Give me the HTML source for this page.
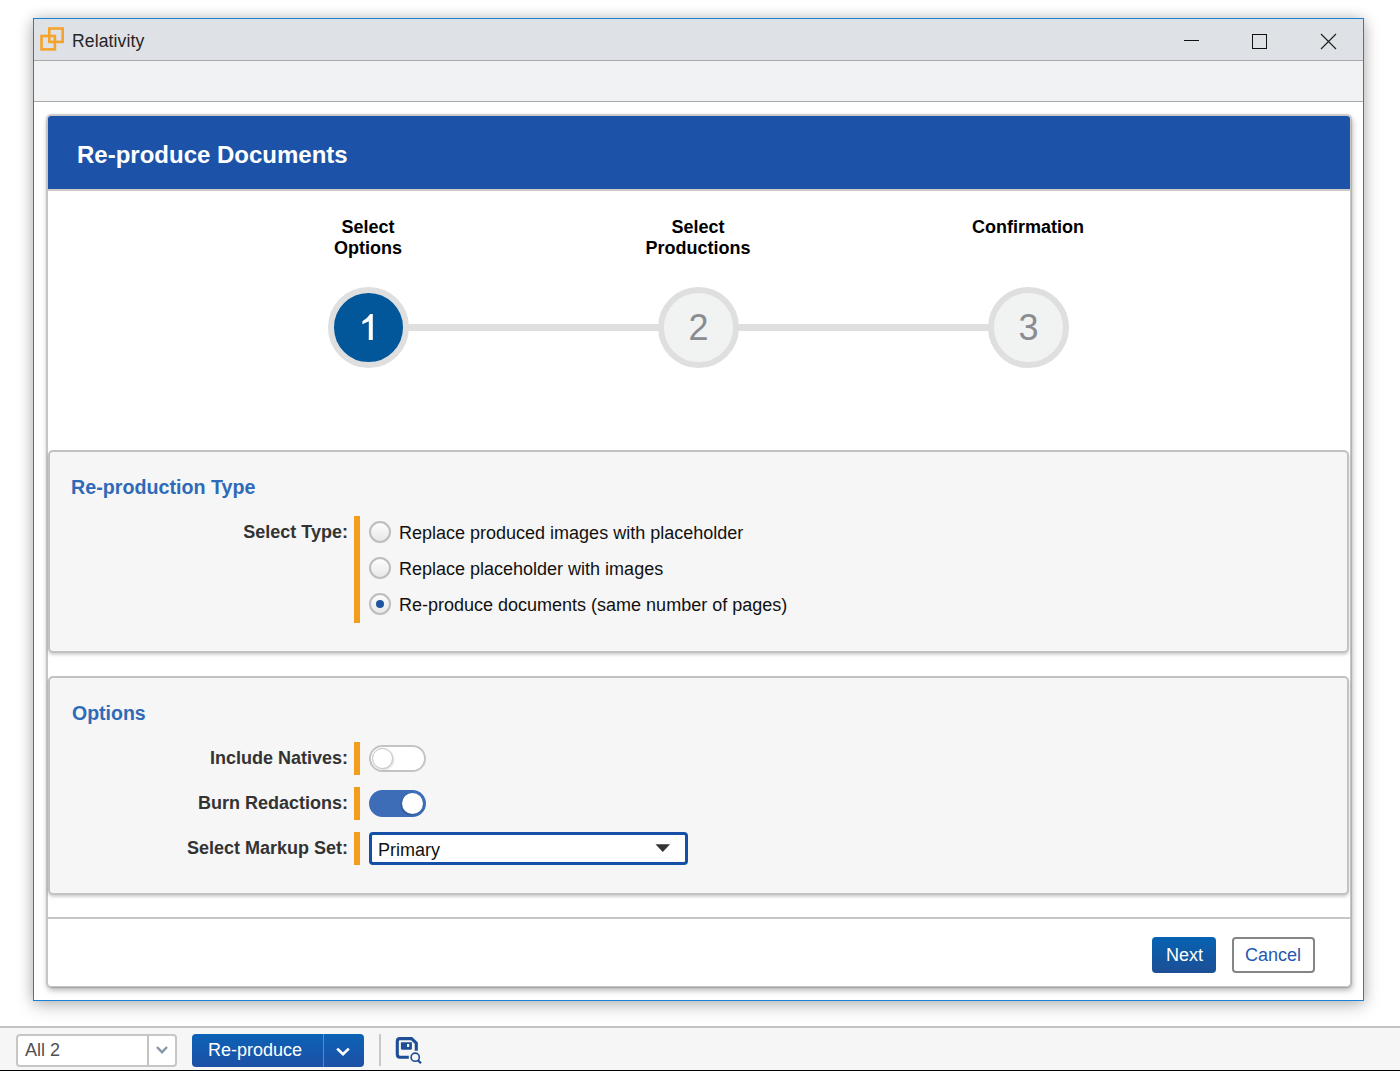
<!DOCTYPE html>
<html><head><meta charset="utf-8">
<style>
*{box-sizing:border-box;margin:0;padding:0}
html,body{width:1400px;height:1071px;overflow:hidden;background:#fff;font-family:"Liberation Sans",sans-serif}
body{position:relative}
.a{position:absolute}
.t{position:absolute;white-space:nowrap;line-height:1}
#win{left:33px;top:18px;width:1331px;height:983px;border:1px solid #1a82d6;background:#fff;box-shadow:0 0 12px rgba(0,0,0,.18),0 5px 17px rgba(0,0,0,.2)}
#title{left:34px;top:19px;width:1329px;height:42px;background:#dee1e6;border-bottom:1px solid #a9a9a9}
#tb{left:34px;top:61px;width:1329px;height:41px;background:#f0f2f4;border-bottom:1px solid #a9a9a9}
#dlg{left:47px;top:115px;width:1304px;height:872px;border:1px solid #c9c5c0;border-radius:4px;background:#fff;box-shadow:0 0 1px 1px rgba(0,0,0,.16),1px 3px 6px rgba(0,0,0,.32)}
#hdr{left:48px;top:116px;width:1302px;height:73px;background:#1c53a9;border-radius:3px 3px 0 0}
#hdrline{left:48px;top:189px;width:1302px;height:2px;background:#cdcac6}
.step{width:200px;text-align:center;font-weight:bold;font-size:18px;line-height:21px;color:#000}
.circ{width:81px;height:81px;border-radius:50%;border:6px solid #dfdfdf;background:#f1f2f2;color:#8a8c90;text-align:center;font-size:36px;line-height:69px}
.line{height:7px;background:#dfdfdf}
.panel{left:48px;width:1301px;background:#f6f6f6;border:2px solid #c2c2c2;border-radius:5px;box-shadow:0 2px 3px rgba(0,0,0,.18)}
.ph{color:#2f6ab7;font-weight:bold;font-size:19.5px}
.lbl{text-align:right;font-weight:bold;font-size:18px;color:#333;width:300px}
.bar{left:354px;width:6px;background:#f39d1f}
.radio{left:369px;width:22px;height:22px;border-radius:50%;border:2px solid #bdbdbd;background:linear-gradient(#fdfdfd,#e8e8e8)}
.rtxt{left:399px;font-size:18px;color:#111}
</style></head><body>
<div id="win" class="a"></div>
<div id="title" class="a"></div>
<svg class="a" style="left:38px;top:26px" width="28" height="28" viewBox="0 0 28 28">
  <rect x="11.3" y="2.5" width="13.4" height="13.4" fill="none" stroke="#f5a32a" stroke-width="2.6"/>
  <rect x="3.5" y="10" width="13.4" height="13.4" fill="none" stroke="#f5a32a" stroke-width="2.6"/>
</svg>
<div class="t" style="left:72px;top:32.5px;font-size:17.6px;letter-spacing:0.1px;color:#262626">Relativity</div>
<div class="a" style="left:1184px;top:40px;width:15px;height:1px;background:#111"></div>
<div class="a" style="left:1252px;top:34px;width:15px;height:15px;border:1px solid #111"></div>
<svg class="a" style="left:1319px;top:32px" width="19" height="19" viewBox="0 0 19 19"><path d="M2 2 L17 17 M17 2 L2 17" stroke="#222" stroke-width="1.2"/></svg>
<div id="tb" class="a"></div>

<div id="dlg" class="a"></div>
<div id="hdr" class="a"></div>
<div id="hdrline" class="a"></div>
<div class="t" style="left:77px;top:143px;font-size:24px;font-weight:bold;color:#fff">Re-produce Documents</div>

<div class="a step" style="left:268px;top:217px">Select<br>Options</div>
<div class="a step" style="left:598px;top:217px">Select<br>Productions</div>
<div class="a step" style="left:928px;top:217px">Confirmation</div>
<div class="a line" style="left:400px;top:324px;width:270px"></div>
<div class="a line" style="left:730px;top:324px;width:270px"></div>
<div class="a circ" style="left:328px;top:287px;background:#02579b;color:#fff"></div>
<svg class="a" style="left:355px;top:308px" width="30" height="37" viewBox="355 308 30 37"><path d="M372.8 314 V340 H368.8 V321.2 L362.4 324.3 V321.2 Q367.2 318.6 370.2 314 Z" fill="#fff"/></svg>
<div class="a circ" style="left:658px;top:287px">2</div>
<div class="a circ" style="left:988px;top:287px">3</div>

<!-- panel 1 -->
<div class="a panel" style="top:450px;height:203px"></div>
<div class="t ph" style="left:71px;top:478px;font-size:19.7px">Re-production Type</div>
<div class="t lbl" style="left:48px;top:523px">Select Type:</div>
<div class="a bar" style="top:516px;height:107px"></div>
<div class="a radio" style="top:521px"></div>
<div class="a radio" style="top:557px"></div>
<div class="a radio" style="top:593px"></div>
<div class="a" style="left:376px;top:600px;width:8px;height:8px;border-radius:50%;background:#1e57a0"></div>
<div class="t rtxt" style="top:524px">Replace produced images with placeholder</div>
<div class="t rtxt" style="top:560px">Replace placeholder with images</div>
<div class="t rtxt" style="top:596px">Re-produce documents (same number of pages)</div>

<!-- panel 2 -->
<div class="a panel" style="top:676px;height:219px"></div>
<div class="t ph" style="left:72px;top:704px">Options</div>
<div class="t lbl" style="left:48px;top:749px">Include Natives:</div>
<div class="t lbl" style="left:48px;top:794px">Burn Redactions:</div>
<div class="t lbl" style="left:48px;top:839px">Select Markup Set:</div>
<div class="a bar" style="top:742px;height:33px"></div>
<div class="a bar" style="top:787px;height:33px"></div>
<div class="a bar" style="top:832px;height:33px"></div>
<!-- toggle off -->
<div class="a" style="left:369px;top:745px;width:57px;height:27px;border-radius:14px;border:2px solid #c4c4c4;background:#fff"></div>
<div class="a" style="left:372px;top:748px;width:21px;height:21px;border-radius:50%;border:1.6px solid #c2c2c2;background:#fff;box-shadow:1px 1px 2px rgba(0,0,0,.15)"></div>
<!-- toggle on -->
<div class="a" style="left:369px;top:790px;width:57px;height:27px;border-radius:14px;background:#3d6db6"></div>
<div class="a" style="left:402px;top:793px;width:21px;height:21px;border-radius:50%;background:#fff;box-shadow:-1px 1px 2px rgba(0,0,0,.25)"></div>
<!-- select -->
<div class="a" style="left:369px;top:832px;width:319px;height:33px;border:3px solid #1650a6;border-radius:4px;background:#fff"></div>
<div class="t" style="left:378px;top:841px;font-size:18px;color:#111">Primary</div>
<svg class="a" style="left:655px;top:844px" width="16" height="10" viewBox="0 0 16 10"><path d="M0.5 0.3 H15 L7.75 8 Z" fill="#333"/></svg>

<!-- footer -->
<div class="a" style="left:48px;top:917px;width:1302px;height:2px;background:#c6c6c6"></div>
<div class="a" style="left:1152px;top:937px;width:64px;height:36px;border-radius:4px;background:linear-gradient(#0662b2,#1c4f95)"></div>
<div class="t" style="left:1166px;top:946px;font-size:18px;color:#fff">Next</div>
<div class="a" style="left:1232px;top:937px;width:83px;height:36px;border-radius:4px;border:2px solid #858585;background:#fff"></div>
<div class="t" style="left:1245px;top:946px;font-size:18px;color:#2458b2">Cancel</div>

<!-- bottom bar -->
<div class="a" style="left:0;top:1026px;width:1400px;height:45px;background:#f6f6f6;border-top:2px solid #c3c3c3"></div>
<div class="a" style="left:0;top:1070px;width:1400px;height:1px;background:#000"></div>
<div class="a" style="left:16px;top:1034px;width:161px;height:33px;border:2px solid #c6c6c6;border-radius:4px;background:#fff"></div>
<div class="a" style="left:147px;top:1036px;width:1.5px;height:29px;background:#c2c2c2"></div>
<svg class="a" style="left:154px;top:1044px" width="16" height="12" viewBox="0 0 16 12"><path d="M3 3 L8 8.3 L13 3" fill="none" stroke="#8797ab" stroke-width="2.5"/></svg>
<div class="t" style="left:25px;top:1041px;font-size:18px;color:#505050">All 2</div>
<div class="a" style="left:192px;top:1034px;width:172px;height:33px;border-radius:4px;background:linear-gradient(#0b62b6,#1e50a5)"></div>
<div class="a" style="left:323px;top:1034px;width:1px;height:33px;background:#4b8fd2"></div>
<div class="t" style="left:208px;top:1041px;font-size:18px;color:#fff">Re-produce</div>
<svg class="a" style="left:334px;top:1045px" width="18" height="13" viewBox="0 0 18 13"><path d="M3.2 3.6 L9 9.2 L14.8 3.6" fill="none" stroke="#fff" stroke-width="2.7"/></svg>
<div class="a" style="left:379px;top:1034px;width:2px;height:32px;background:#c8c8c8"></div>
<svg class="a" style="left:390px;top:1032px" width="38" height="36" viewBox="0 0 38 36">
  <path d="M18.8 25.3 H10 Q7.3 25.3 7.3 22.6 V9.3 Q7.3 6.6 10 6.6 H21.6 L26.3 11.1 V18.8" fill="none" stroke="#1d4f96" stroke-width="3.1"/>
  <path d="M10.9 10.3 H21.9 V16.2 Q21.9 17.8 20.3 17.8 H12.5 Q10.9 17.8 10.9 16.2 Z" fill="#1d4f96"/>
  <rect x="17" y="12" width="2.2" height="3" fill="#f6f6f6"/>
  <circle cx="25.2" cy="25.2" r="4.1" fill="none" stroke="#1d4f96" stroke-width="1.6"/>
  <path d="M28 28.4 L31 31.2" stroke="#1d4f96" stroke-width="2.2"/>
</svg>
</body></html>
